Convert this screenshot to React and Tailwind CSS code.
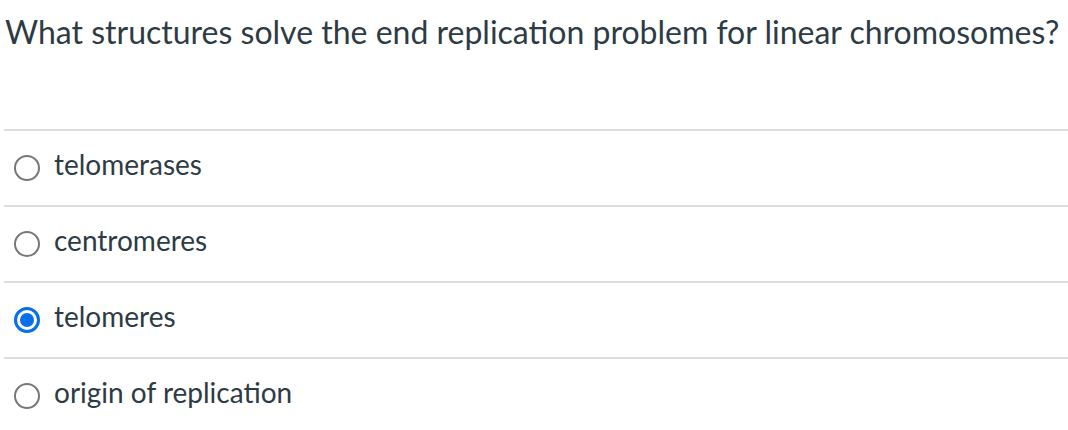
const options = [
  { label: "telomerases", checked: false },
  { label: "centromeres", checked: false },
  { label: "telomeres", checked: true },
  { label: "origin of replication", checked: false },
];

function Radio({ checked }) {
  if (checked) {
    return (
      <span className="w-[26px] h-[26px] rounded-full border-[3px] border-[#0770e8] flex items-center justify-center shrink-0">
        <span className="w-[14px] h-[14px] rounded-full bg-[#0770e8]" />
      </span>
    );
  }
  return <span className="w-[26px] h-[26px] rounded-full border-2 border-[#777777] shrink-0" />;
}

export default function App() {
  return (
    <div className="min-h-screen bg-white text-[#2d3b45] font-['Lato','Noto_Sans',sans-serif] pl-[4px]">
      <div className="h-[129px] pt-[12px] pl-[1px]">
        <h1 className="text-[32px] leading-[40px] font-normal">
          What structures solve the end replication problem for linear chromosomes?
        </h1>
      </div>
      {options.map((o) => (
        <div key={o.label} className="h-[76px] border-t-2 border-[#dddddd] flex items-center pl-[10px] gap-[14px]">
          <Radio checked={o.checked} />
          <span className="text-[28px] leading-[32px] pb-[8px]">{o.label}</span>
        </div>
      ))}
    </div>
  );
}
